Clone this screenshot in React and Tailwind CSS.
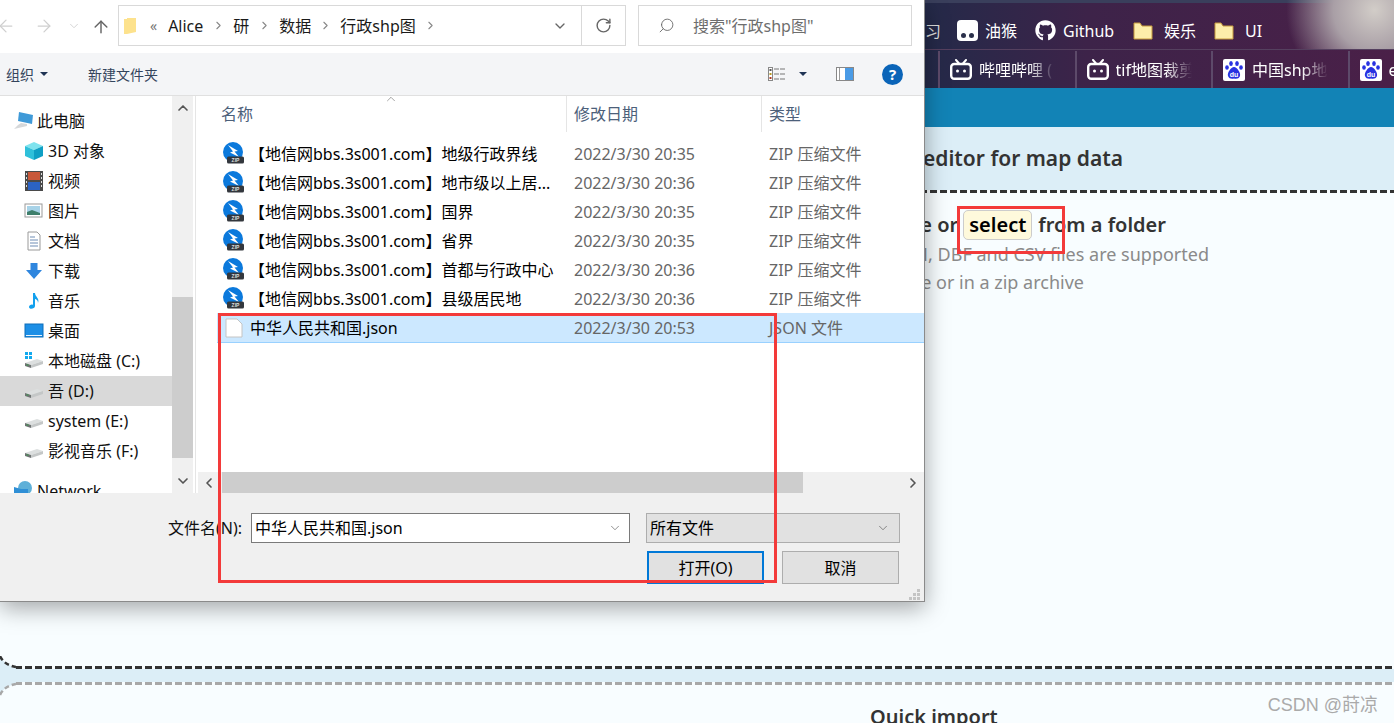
import React from "react";
import { ArrowLeft, ArrowRight, ArrowUp, ChevronDown, ChevronLeft, ChevronRight, ChevronUp, RotateCw, Search } from "lucide-react";
import { FaGithub } from "react-icons/fa";

const uiFont = "font-['Noto_Sans','Noto_Sans_CJK_SC',sans-serif]";

const ZipIcon = () => (
  <svg width="24" height="24" viewBox="0 0 24 24" className="shrink-0">
    <circle cx="11" cy="10" r="10" fill="#0b79dc" />
    <path d="M6 3 L16 9 L12.5 9.5 L17 15 L8 10.5 L11 9.5 Z" fill="#fff" />
    <rect x="5" y="14.5" width="17" height="7" rx="1.5" fill="#33373d" />
    <text x="13.5" y="20" fontSize="5" fontWeight="700" textAnchor="middle" fill="#ddd" fontFamily="Liberation Sans">ZIP</text>
  </svg>
);

const DriveIcon = ({ win }) => (
  <svg width="20" height="20" viewBox="0 0 20 20" className="shrink-0">
    {win && <path d="M1 1h3v3H1zM5 1h3v3H5zM1 5h3v3H1zM5 5h3v3H5z" fill="#12a9ee" />}
    <path d="M1 12 L13 8 L19 10 L7 14Z" fill="#dcdfdf" />
    <path d="M7 14 L19 10 V13 L7 17Z" fill="#c4c7c7" />
    <path d="M1 12 L7 14 V17 L1 15Z" fill="#6f7373" />
    <rect x="2.5" y="13.5" width="2" height="1" fill="#35a04a" />
  </svg>
);

const navIcons = {
  pc: (
    <svg width="22" height="20" viewBox="0 0 22 20">
      <path d="M6 1 L20 4 L19 13 L5 10Z" fill="#3f9ad8" />
      <path d="M8 12 L14 13 L14 15 L1 18 L5 14Z" fill="#d6d8da" />
    </svg>
  ),
  cube: (
    <svg width="20" height="20" viewBox="0 0 20 20">
      <path d="M10 1 L19 5 L10 9 L1 5Z" fill="#7fe3ee" />
      <path d="M1 5 L10 9 L10 19 L1 15Z" fill="#2fc0da" />
      <path d="M19 5 L10 9 L10 19 L19 15Z" fill="#0f9fc4" />
    </svg>
  ),
  video: (
    <svg width="20" height="20" viewBox="0 0 20 20">
      <rect x="1" y="0" width="18" height="20" fill="#4a4a4a" />
      <rect x="4" y="1" width="12" height="8" fill="#c8583a" />
      <rect x="4" y="11" width="12" height="8" fill="#2b63c4" />
      <path d="M2 2h1v2H2zM2 6h1v2H2zM2 10h1v2H2zM2 14h1v2H2zM17 2h1v2h-1zM17 6h1v2h-1zM17 10h1v2h-1zM17 14h1v2h-1z" fill="#ddd" />
    </svg>
  ),
  picture: (
    <svg width="20" height="18" viewBox="0 0 20 18">
      <rect x="1" y="2" width="17" height="13" fill="#fff" stroke="#9a9a9a" />
      <rect x="3" y="4" width="13" height="9" fill="#a8d3e8" />
      <path d="M3 10 L8 8 L16 11 L16 13 L3 13Z" fill="#3e7f6c" />
    </svg>
  ),
  doc: (
    <svg width="20" height="20" viewBox="0 0 20 20">
      <path d="M4 1 H13 L16 4 V19 H4Z" fill="#fff" stroke="#9a9a9a" />
      <path d="M6 6h5M6 9h8M6 12h8M6 15h8" stroke="#6f8db5" />
    </svg>
  ),
  download: (
    <svg width="20" height="20" viewBox="0 0 20 20">
      <path d="M6.5 2 H13.5 V9 H18 L10 18 L2 9 H6.5Z" fill="#2f86de" />
    </svg>
  ),
  music: (
    <svg width="20" height="20" viewBox="0 0 20 20">
      <path d="M9 2 H11 C11 6 16 7 14 12 C14 9 12 8 11 8 V15 C11 18 5 19 5 16 C5 14 8 13 9 14Z" fill="#12a0ee" />
    </svg>
  ),
  desktop: (
    <svg width="20" height="18" viewBox="0 0 20 18">
      <rect x="1" y="2" width="18" height="13" fill="#1d8fe6" stroke="#0f6fba" />
      <rect x="2" y="13" width="16" height="1" fill="#e8f4fd" />
    </svg>
  ),
  network: (
    <svg width="22" height="20" viewBox="0 0 22 20">
      <circle cx="12" cy="7" r="7" fill="#5fb0d8" />
      <path d="M1 6 L8 8 L15 8 L15 20 L1 20Z" fill="#2f8fd6" />
    </svg>
  ),
};

const navItems = [
  { label: "此电脑", icon: "pc", top: true },
  { label: "3D 对象", icon: "cube" },
  { label: "视频", icon: "video" },
  { label: "图片", icon: "picture" },
  { label: "文档", icon: "doc" },
  { label: "下载", icon: "download" },
  { label: "音乐", icon: "music" },
  { label: "桌面", icon: "desktop" },
  { label: "本地磁盘 (C:)", drive: "win" },
  { label: "吾 (D:)", drive: "plain", active: true },
  { label: "system (E:)", drive: "plain" },
  { label: "影视音乐 (F:)", drive: "plain" },
  { label: "Network", icon: "network", top: true, gap: true },
];

const files = [
  { name: "【地信网bbs.3s001.com】地级行政界线", date: "2022/3/30 20:35" },
  { name: "【地信网bbs.3s001.com】地市级以上居...", date: "2022/3/30 20:36" },
  { name: "【地信网bbs.3s001.com】国界", date: "2022/3/30 20:35" },
  { name: "【地信网bbs.3s001.com】省界", date: "2022/3/30 20:35" },
  { name: "【地信网bbs.3s001.com】首都与行政中心", date: "2022/3/30 20:36" },
  { name: "【地信网bbs.3s001.com】县级居民地", date: "2022/3/30 20:36" },
];

const FolderIcon = () => (
  <svg width="20" height="18" viewBox="0 0 20 18" className="shrink-0">
    <path d="M1 1 H7 L9 4 H19 V17 H1Z" fill="#fdeeaa" stroke="#c69a3c" />
  </svg>
);

const BiliIcon = () => (
  <svg width="22" height="21" viewBox="0 0 22 21" className="shrink-0">
    <path d="M6 1 L9 4.5 M16 1 L13 4.5" stroke="#fff" strokeWidth="2" strokeLinecap="round" />
    <rect x="1.2" y="5" width="19.6" height="14.8" rx="3" fill="none" stroke="#fff" strokeWidth="2.4" />
    <circle cx="7.5" cy="12" r="1.5" fill="#fff" />
    <circle cx="14.5" cy="12" r="1.5" fill="#fff" />
  </svg>
);

const BaiduIcon = () => (
  <svg width="22" height="22" viewBox="0 0 22 22" className="shrink-0">
    <rect width="22" height="22" rx="2" fill="#fff" />
    <ellipse cx="8" cy="4.5" rx="1.8" ry="2.5" fill="#2932e1" />
    <ellipse cx="14" cy="4.5" rx="1.8" ry="2.5" fill="#2932e1" />
    <ellipse cx="4" cy="8.5" rx="1.8" ry="2.3" fill="#2932e1" />
    <ellipse cx="18" cy="8.5" rx="1.8" ry="2.3" fill="#2932e1" />
    <path d="M11 8 C14 8 18 14 17 17 C16 20 13 20 11 19.5 C9 20 6 20 5 17 C4 14 8 8 11 8Z" fill="#2932e1" />
    <text x="11" y="17.5" fontSize="7" fontWeight="700" textAnchor="middle" fill="#fff" fontFamily="Liberation Sans">du</text>
  </svg>
);

const tabs = [
  { icon: "bili", title: "哔哩哔哩 (" },
  { icon: "bili", title: "tif地图裁剪" },
  { icon: "baidu", title: "中国shp地图" },
  { icon: "baidu", title: "e" },
];

const DashLine = ({ light }) => (
  <div
    className={`h-[3px] shrink-0 ${
      light
        ? "bg-[repeating-linear-gradient(90deg,#a8a8a8_0_7px,transparent_7px_10px)]"
        : "bg-[repeating-linear-gradient(90deg,#333_0_7px,transparent_7px_10px)]"
    }`}
  />
);

const BrowserBar = () => (
  <div className={`h-[88px] shrink-0 flex flex-col bg-[linear-gradient(90deg,#1e2a45_0%,#232a49_66%,#3d2349_78%,#4a2048_100%)] relative overflow-hidden text-white ${uiFont}`}>
    <div className="absolute right-0 top-0 w-[130px] h-[50px] bg-[radial-gradient(circle_at_85%_20%,#d2cdc8_0%,#a99fa6_35%,transparent_75%)]" />
    <div className="h-[3px] bg-[#3a3f5c] mr-[30px]" />
    <div className="relative h-[46px] flex items-center pt-[10px] pl-[925px] text-[16px]">
      <span className="w-[32px] whitespace-nowrap text-[#ddd]">习</span>
      <span className="w-[21px] h-[21px] rounded-[4px] bg-white flex items-end justify-center gap-[3px] pb-[3px] shrink-0">
        <span className="w-[5px] h-[5px] rounded-full bg-[#2a2f4a]" />
        <span className="w-[5px] h-[5px] rounded-full bg-[#2a2f4a]" />
      </span>
      <span className="ml-[7px] w-[50px]">油猴</span>
      <FaGithub size={21} className="shrink-0" />
      <span className="ml-[7px] w-[70px]">Github</span>
      <FolderIcon />
      <span className="ml-[11px] w-[50px]">娱乐</span>
      <FolderIcon />
      <span className="ml-[11px]">UI</span>
    </div>
    <div className="relative h-[39px] mt-[1px] pt-[1px] flex border-t border-[#55405f] pl-[938px]">
      {tabs.map((tab, idx) => (
        <div key={idx} className="w-[136.5px] shrink-0 flex items-center pl-[10px] border-l-2 border-[#5d4a6a] text-[16px]">
          {tab.icon === "bili" ? <BiliIcon /> : <BaiduIcon />}
          <span className="ml-[7px] w-[76px] overflow-hidden whitespace-nowrap [mask-image:linear-gradient(90deg,#000_65%,transparent)]">
            {tab.title}
          </span>
        </div>
      ))}
    </div>
  </div>
);

const WebPage = () => (
  <div className="h-full flex flex-col bg-[#f8fdff] font-['Noto_Sans',sans-serif] text-[#333]">
    <BrowserBar />
    <div className="h-[39px] shrink-0 bg-[#1283b6]" />
    <div className="h-[63px] shrink-0 bg-[#dceef7] flex items-center justify-end pt-[1px] pr-[271px] text-[21px] font-semibold whitespace-nowrap">
      editor for map data
    </div>
    <DashLine />
    <div className="h-[473px] shrink-0 flex flex-col pt-[16px]">
      <div className="h-[32px] flex items-center justify-end pr-[228px] text-[20px] font-semibold whitespace-nowrap">
        here or
        <span className="ml-[5px] mr-[6px] px-[5px] h-[30px] flex items-center bg-[#fef9dc] border border-[#ccc] rounded-[5px] text-black">select</span>
        from a folder
      </div>
      <div className="mt-[-1px] h-[28px] flex items-center justify-end pr-[185px] text-[18px] text-[#8a8a8a] whitespace-nowrap">
        JSON, DBF and CSV files are supported
      </div>
      <div className="h-[28px] flex items-center justify-end pr-[310px] text-[18px] text-[#8a8a8a] whitespace-nowrap">
        time or in a zip archive
      </div>
    </div>
    <div className="relative shrink-0 ml-[15px]">
      <DashLine />
      <div className="h-[13px] bg-[#dceef7]" />
      <DashLine light />
      <svg width="16" height="40" viewBox="0 0 16 40" className="absolute left-[-15px] top-[-10px]">
        <path d="M0 0 Q4 9 16 11 V28 Q4 30 0 39Z" fill="#dceef7" />
        <path d="M0 0 Q4 9 16 11" fill="none" stroke="#333" strokeWidth="2.5" strokeDasharray="5 3" />
        <path d="M0 39 Q4 30 16 28" fill="none" stroke="#a8a8a8" strokeWidth="2.5" strokeDasharray="5 3" />
      </svg>
    </div>
    <div className="pt-[17px] pl-[870px] text-[20px] font-semibold whitespace-nowrap">Quick import</div>
  </div>
);

const ColumnHeader = () => (
  <div className="h-[36px] shrink-0 flex relative text-[16px] text-[#4c607a]">
    <div className="w-[371px] pl-[25px] pt-[6px] border-r border-[#e5e5e5]">名称</div>
    <ChevronUp size={14} strokeWidth={1} className="absolute left-[188px] top-[-4px] text-[#666]" />
    <div className="w-[195px] pl-[7px] pt-[6px] border-r border-[#e5e5e5]">修改日期</div>
    <div className="pl-[7px] pt-[6px]">类型</div>
  </div>
);

const FileRow = ({ file }) => (
  <div className="h-[29px] flex items-center text-[16px] whitespace-nowrap">
    <div className="w-[379px] pl-[27px] flex items-center text-black">
      <ZipIcon />
      <span className="ml-[3px]">{file.name}</span>
    </div>
    <div className="w-[195px] text-[#666]">{file.date}</div>
    <div className="text-[#666]">ZIP 压缩文件</div>
  </div>
);

const FileDialog = () => (
  <div className={`absolute left-0 top-0 w-[925px] h-[602px] flex flex-col bg-white border-r border-b border-[#8a8a8a] shadow-[0_6px_22px_rgba(0,0,0,0.35)] ${uiFont}`}>
    <div className="h-[53px] shrink-0 flex items-start pt-[5px] relative text-[#b4b4b4]">
      <ArrowLeft size={20} strokeWidth={1.5} className="absolute left-[-4px] top-[16px] text-[#cfcfcf]" />
      <ArrowRight size={20} strokeWidth={1.5} className="absolute left-[34px] top-[16px] text-[#cfcfcf]" />
      <ChevronDown size={14} strokeWidth={1.5} className="absolute left-[67px] top-[19px] text-[#cfcfcf]" />
      <ArrowUp size={20} strokeWidth={1.75} className="absolute left-[91px] top-[17px] text-[#666]" />
      <div className="ml-[118px] w-[508px] h-[41px] flex items-center border border-[#d9d9d9] text-[16px] text-[#1a1a1a] whitespace-nowrap">
        <svg width="13" height="18" viewBox="0 0 13 18" className="ml-[5px] shrink-0">
          <path d="M0 2 H3 V1 H12 V15 L3 17 H0Z" fill="#fde28d" />
        </svg>
        <span className="ml-[13px] text-[#777] text-[14px]">«</span>
        <span className="ml-[11px]">Alice</span>
        <ChevronRight size={13} className="mx-[8.5px] text-[#888]" />
        <span>研</span>
        <ChevronRight size={13} className="mx-[8.5px] text-[#888]" />
        <span>数据</span>
        <ChevronRight size={13} className="mx-[8px] text-[#888]" />
        <span>行政shp图</span>
        <ChevronRight size={13} className="mx-[8px] text-[#888]" />
        <ChevronDown size={16} className="ml-auto mr-[13px] text-[#666]" />
        <div className="w-[44px] h-full shrink-0 flex items-center justify-center border-l border-[#d9d9d9]">
          <RotateCw size={17} className="text-[#666]" />
        </div>
      </div>
      <div className="ml-[12px] w-[274px] h-[41px] flex items-center border border-[#d9d9d9] text-[16px] text-[#6e6e6e] whitespace-nowrap">
        <Search size={17} strokeWidth={1.25} className="ml-[19px] -scale-x-100 text-[#666]" />
        <span className="ml-[18px]">搜索"行政shp图"</span>
      </div>
    </div>

    <div className="h-[43px] shrink-0 flex items-center bg-[#f4f5f7] border-b border-[#e0e0e0] text-[14px] text-[#33445c] relative">
      <span className="ml-[6px] mt-[1px]">组织</span>
      <span className="ml-[6px] w-0 h-0 border-x-[4px] border-x-transparent border-t-[4px] border-t-[#1f3354]" />
      <span className="ml-[40px] mt-[1px]">新建文件夹</span>
      <svg width="20" height="16" viewBox="0 0 20 16" className="ml-[610px]">
        <rect x="0.5" y="1.5" width="4" height="13" fill="#fff" stroke="#888" />
        <rect x="1.5" y="3" width="2" height="2" fill="#555" />
        <rect x="1.5" y="7" width="2" height="2" fill="#b89a22" />
        <rect x="1.5" y="11" width="2" height="2" fill="#b03a22" />
        <path d="M6 3h12M6 8h12M6 13h12" stroke="#777" strokeDasharray="5 1" />
      </svg>
      <span className="ml-[11px] w-0 h-0 border-x-[4px] border-x-transparent border-t-[4px] border-t-[#1f3354]" />
      <svg width="18" height="14" viewBox="0 0 18 14" className="ml-[29px]">
        <rect x="0.5" y="0.5" width="17" height="13" fill="#fff" stroke="#888" />
        <rect x="9" y="1" width="8" height="12" fill="#4a9be6" />
        <rect x="3" y="1" width="1" height="12" fill="#999" />
      </svg>
      <span className="ml-[28px] w-[21px] h-[21px] rounded-full bg-[#0a64b8] text-white flex items-center justify-center text-[15px] font-bold">?</span>
    </div>

    <div className="h-[397px] shrink-0 flex bg-white">
      <div className="w-[172px] shrink-0 pt-[10px] overflow-hidden text-[16px] text-[#111] whitespace-nowrap">
        {navItems.map((item) => (
          <div key={item.label} className={`h-[30px] shrink-0 flex items-center ${item.active ? "bg-[#d9d9d9]" : ""} ${item.top ? "pl-[13px]" : "pl-[24px]"} ${item.gap ? "mt-[10px]" : ""}`}>
            <span className="w-[24px] shrink-0 flex items-center">
              {item.drive ? <DriveIcon win={item.drive === "win"} /> : navIcons[item.icon]}
            </span>
            <span>{item.label}</span>
          </div>
        ))}
      </div>
      <div className="w-[21px] shrink-0 flex flex-col items-center bg-[#f0f0f0] text-[#555]">
        <ChevronUp size={16} strokeWidth={2.5} className="mt-[4px]" />
        <div className="w-full h-[161px] mt-[181px] bg-[#cdcdcd]" />
        <ChevronDown size={16} strokeWidth={2.5} className="mt-[15px]" />
      </div>
      <div className="w-[3px] shrink-0 bg-white border-r border-[#e5e5e5]" />
      <div className="flex-1 min-w-0 flex flex-col">
        <ColumnHeader />
        <div className="flex-1 min-h-0 pt-[7px]">
          <div className="ml-[-1px]">
            {files.map((file) => (
              <FileRow key={file.name} file={file} />
            ))}
          </div>
          <div className="h-[30px] ml-[21px] flex items-center bg-[#cce8ff] border-b border-[#99d1ff] text-[16px] whitespace-nowrap">
            <svg width="18" height="20" viewBox="0 0 18 20" className="ml-[8px] shrink-0">
              <path d="M1 1 H12 L17 6 V19 H1Z" fill="#fff" stroke="#c4c4c4" />
            </svg>
            <span className="ml-[7px] w-[324px]">中华人民共和国.json</span>
            <span className="w-[195px] text-[#666]">2022/3/30 20:53</span>
            <span className="text-[#666]">JSON 文件</span>
          </div>
        </div>
        <div className="h-[21px] shrink-0 flex items-center bg-[#f0f0f0] ml-[2px] text-[#555]">
          <div className="w-[24px] h-full shrink-0 flex items-center pl-[3px]">
            <ChevronLeft size={16} strokeWidth={2.5} />
          </div>
          <div className="h-full w-[581px] bg-[#cdcdcd]" />
          <ChevronRight size={16} strokeWidth={2.5} className="ml-auto mr-[3px]" />
        </div>
      </div>
    </div>

    <div className="flex-1 bg-[#f0f0f0] pt-[20px] relative text-[16px]">
      <div className="flex items-center h-[30px]">
        <span className="ml-[168px] w-[83px] whitespace-nowrap text-[#111]">文件名(N):</span>
        <div className="w-[379px] h-full flex items-center bg-white border border-[#7a7a7a] pl-[3px] text-black">
          中华人民共和国.json
          <ChevronDown size={14} strokeWidth={1} className="ml-auto mr-[7px] text-[#444]" />
        </div>
        <div className="ml-[16px] w-[254px] h-full flex items-center bg-[#e1e1e1] border border-[#adadad] pl-[3px] text-black">
          所有文件
          <ChevronDown size={14} strokeWidth={1} className="ml-auto mr-[9px] text-[#444]" />
        </div>
      </div>
      <div className="flex mt-[8px] h-[33px]">
        <button className="ml-[647px] w-[117px] h-full bg-[#e1e1e1] border-2 border-[#0078d7] text-black">打开(O)</button>
        <button className="ml-[18px] w-[117px] h-full bg-[#e1e1e1] border border-[#adadad] text-black">取消</button>
      </div>
      <svg width="12" height="11" viewBox="0 0 12 11" className="absolute right-[4px] bottom-[1px]">
        <path d="M9 0h3v3H9zM5 4h3v3H5zM9 4h3v3H9zM1 8h3v3H1zM5 8h3v3H5zM9 8h3v3H9z" fill="#c4c4c4" />
      </svg>
    </div>
  </div>
);

const App = () => {
  return (
    <div className="relative w-[1394px] h-[723px] overflow-hidden">
      <WebPage />
      <FileDialog />
      <div className="absolute left-[218px] top-[313px] w-[559px] h-[270px] border-[3px] border-[#f33a3a]" />
      <div className="absolute left-[957px] top-[206px] w-[108px] h-[48px] border-[3px] border-[#f33a3a]" />
      <div className="absolute right-[16px] bottom-[4px] text-[18px] text-[#aaa] font-['Liberation_Sans','Noto_Sans_CJK_SC',sans-serif]">CSDN @莳凉</div>
    </div>
  );
};

export default App;
